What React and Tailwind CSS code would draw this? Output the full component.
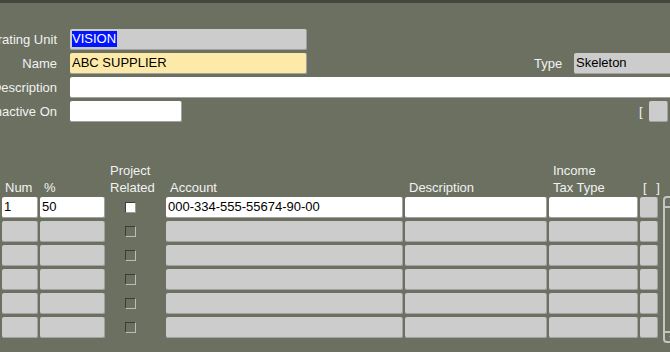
import React from "react";

const font = { fontFamily: '"Liberation Sans", Arial, sans-serif' };

const Field = ({ className = "", children }) => (
    <div
        className={`h-[21px] shrink-0 rounded-[2px] border-b border-r border-[#a2a2a2] pl-[2px] flex items-center overflow-hidden whitespace-nowrap text-[13px] text-black ${className}`}
    >
        {children}
    </div>
);

const Label = ({ children }) => (
    <div className="w-[57px] shrink-0 flex justify-end whitespace-nowrap text-[13px] text-[#f2f2f2]">
        {children}
    </div>
);

const Check = ({ on }) => (
    <div className="w-[60px] shrink-0 flex items-center pl-[20px]">
        <div
            className={`w-[11px] h-[11px] border-t border-l border-[#3c3c3c] border-b border-r ${
                on ? "bg-white border-b-[#9a9a9a] border-r-[#9a9a9a]" : "border-b-[#bcbcbc] border-r-[#bcbcbc]"
            }`}
        ></div>
    </div>
);

const rows = [
    { num: "1", pct: "50", account: "000-334-555-55674-90-00", active: true },
    {}, {}, {}, {}, {},
];

export default function App() {
    return (
        <div className="w-[670px] h-[352px] overflow-hidden bg-[#6b7060] relative" style={font}>
            {/* top strip */}
            <div className="h-[3px] bg-[#44473e]"></div>

            {/* header form */}
            <div className="pt-[26px] flex flex-col gap-[3px]">
                <div className="flex items-center gap-[13px]">
                    <Label>Operating Unit</Label>
                    <Field className="w-[237px] bg-[#cccccc]">
                        <span className="bg-[#0014ff] text-white leading-[16px] pr-[1px]">VISION</span>
                    </Field>
                </div>
                <div className="flex items-center gap-[13px]">
                    <Label>Name</Label>
                    <Field className="w-[237px] bg-[#feeaa8]">ABC SUPPLIER</Field>
                    <div className="ml-[214px] text-[13px] text-[#f2f2f2] w-[27px] shrink-0">Type</div>
                    <Field className="w-[110px] bg-[#cccccc]">Skeleton</Field>
                </div>
                <div className="flex items-center gap-[13px]">
                    <Label>Description</Label>
                    <Field className="w-[620px] bg-white"></Field>
                </div>
                <div className="flex items-center gap-[13px]">
                    <Label>Inactive On</Label>
                    <Field className="w-[112px] bg-white"></Field>
                    <div className="ml-[444px] flex items-center gap-[6px] shrink-0">
                        <span className="text-[13px] text-[#f2f2f2] w-[4px]">[</span>
                        <div className="w-[19px] h-[21px] rounded-[2px] bg-[#cccccc] border-b border-r border-[#a2a2a2]"></div>
                    </div>
                </div>
            </div>

            {/* table headers */}
            <div className="mt-[42px] flex items-end text-[13px] text-[#f2f2f2] leading-[17px] h-[32px]">
                <div className="w-[40px] pl-[5px] shrink-0">Num</div>
                <div className="w-[65px] pl-[4px] shrink-0">%</div>
                <div className="w-[61px] pl-[5px] shrink-0">
                    <div>Project</div>
                    <div>Related</div>
                </div>
                <div className="w-[239px] pl-[4px] shrink-0">Account</div>
                <div className="w-[144px] pl-[4px] shrink-0">Description</div>
                <div className="w-[91px] pl-[4px] shrink-0">
                    <div>Income</div>
                    <div>Tax Type</div>
                </div>
                <div className="pl-[3px] shrink-0 tracking-[3px]">[ ]</div>
            </div>

            {/* table body */}
            <div className="mt-[1px] flex">
                <div className="flex flex-col gap-[3px] pl-[2px]">
                    {rows.map((r, i) => {
                        const bg = r.active ? "bg-white" : "bg-[#cccccc]";
                        return (
                            <div key={i} className="flex items-center">
                                <Field className={`w-[36px] ${bg}`}>{r.num}</Field>
                                <Field className={`ml-[2px] w-[65px] ${bg}`}>{r.pct}</Field>
                                <Check on={r.active} />
                                <Field className={`ml-[1px] w-[237px] ${bg}`}>{r.account}</Field>
                                <Field className={`ml-[2px] w-[142px] ${bg}`}></Field>
                                <Field className={`ml-[2px] w-[89px] ${bg}`}></Field>
                                <Field className="ml-[2px] w-[18px] bg-[#cccccc]"></Field>
                            </div>
                        );
                    })}
                </div>

                {/* scrollbar */}
                <div className="ml-[5px] -mt-[1px] w-[16px] h-[147px] shrink-0 rounded-[4px] border-2 border-[#c4c4c4] flex flex-col items-center">
                    <div className="h-[10px] w-full border-b-2 border-[#c4c4c4] flex justify-center items-center">
                        <div className="w-0 h-0 border-l-[2px] border-r-[2px] border-b-[3px] border-l-transparent border-r-transparent border-b-[#9a9a9a]"></div>
                    </div>
                    <div className="flex-1 flex flex-col justify-center gap-[3px]">
                        <div className="w-[2px] h-[2px] bg-[#d0d0d0]"></div>
                        <div className="w-[2px] h-[2px] bg-[#d0d0d0]"></div>
                        <div className="w-[2px] h-[2px] bg-[#d0d0d0]"></div>
                    </div>
                    <div className="h-[10px] w-full border-t-2 border-[#c4c4c4] flex justify-center items-center">
                        <div className="w-0 h-0 border-l-[2px] border-r-[2px] border-t-[3px] border-l-transparent border-r-transparent border-t-[#9a9a9a]"></div>
                    </div>
                </div>
            </div>
        </div>
    );
}
